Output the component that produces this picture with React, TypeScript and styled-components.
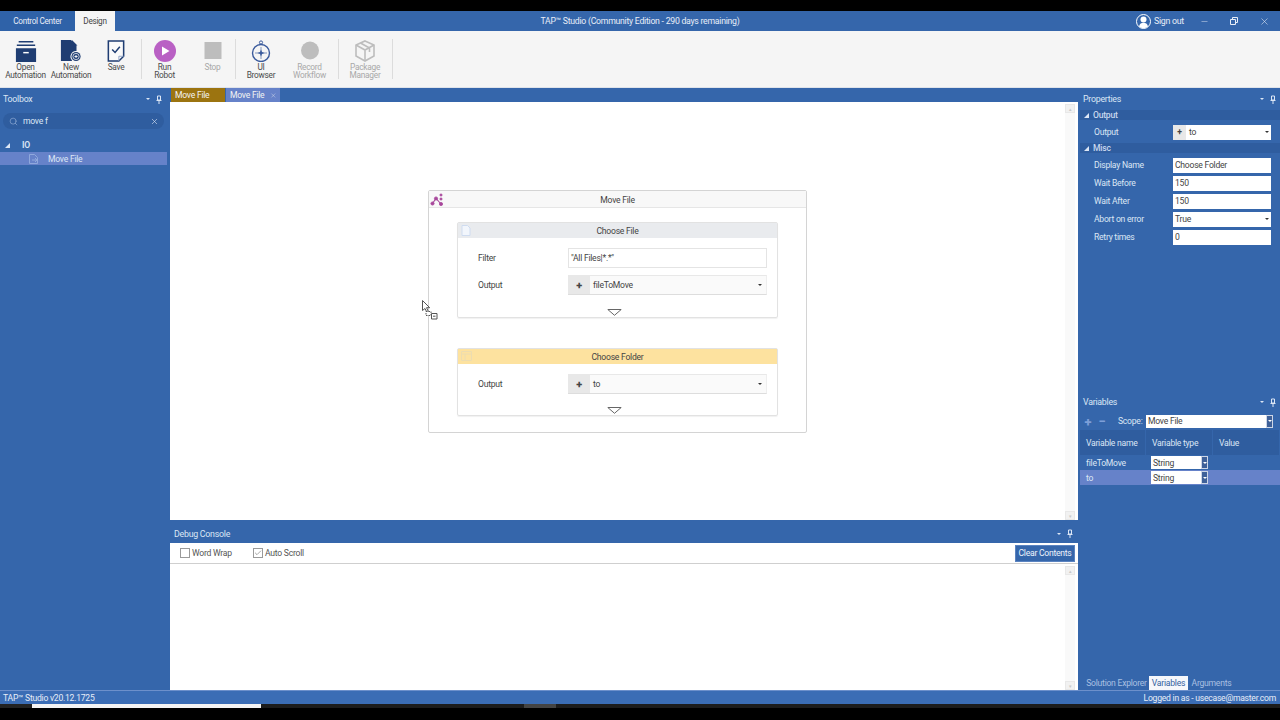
import styled, { createGlobalStyle } from 'styled-components';
import { X, Minus, Search, Check } from 'lucide-react';

const BLUE = '#3566ab';
const DARK = '#2f5d9f';
const SELECT = '#6682c9';

const GlobalStyle = createGlobalStyle`
    html, body {
        margin: 0;
        padding: 0;
        background: #000;
    }
    * {
        box-sizing: border-box;
    }
`;

const Screen = styled.div`
    width: 1280px;
    height: 720px;
    overflow: hidden;
    display: flex;
    flex-direction: column;
    background: #000;
    padding: 11px 0 12px;
    font-family: 'Roboto', 'Open Sans', sans-serif;
    font-size: 8.6px;
    letter-spacing: -0.25px;
    color: #fff;
    white-space: nowrap;
`;

const TitleBar = styled.div`
    height: 20px;
    flex: none;
    background: ${BLUE};
    display: grid;
    grid-template-columns: 1fr auto 1fr;
    align-items: stretch;
`;

const TabGroup = styled.div`
    display: flex;
`;

const TopTab = styled.div<{ $active?: boolean; $width: number }>`
    width: ${(p) => p.$width}px;
    display: flex;
    align-items: center;
    justify-content: center;
    font-size: 8.2px;
    letter-spacing: -0.3px;
    background: ${(p) => (p.$active ? '#f5f5f5' : '#2f62a8')};
    color: ${(p) => (p.$active ? '#444' : '#e8eef8')};
`;

const AppTitle = styled.div`
    display: flex;
    align-items: center;
    color: #e8eef8;
    font-size: 8.7px;
`;

const WindowControls = styled.div`
    display: flex;
    align-items: center;
    justify-content: flex-end;
    color: #e8eef8;
    padding-right: 1px;
`;

const SignOut = styled.span`
    margin: 0 5px 0 3px;
    font-size: 8.8px;
`;

const WindowButton = styled.div`
    width: 30px;
    display: flex;
    align-items: center;
    justify-content: center;
`;

const Ribbon = styled.div`
    height: 57px;
    flex: none;
    background: #f5f5f5;
    display: flex;
    padding: 9px 0 0 3px;
    border-bottom: 1px solid #dfe3ea;
`;

const RibbonButton = styled.div<{ $width: number; $left?: number; $disabled?: boolean }>`
    width: ${(p) => p.$width}px;
    height: 40px;
    flex: none;
    margin-left: ${(p) => p.$left || 0}px;
    display: flex;
    flex-direction: column;
    align-items: center;
    color: ${(p) => (p.$disabled ? '#a8a8a8' : '#4a4a4a')};
    font-size: 8.3px;
    letter-spacing: -0.25px;
    line-height: 7.5px;
    text-align: center;

    svg {
        flex: none;
        height: 22px;
        margin-bottom: 2px;
    }
`;

const RibbonSeparator = styled.div<{ $gap?: number }>`
    width: 1px;
    height: 40px;
    flex: none;
    margin-top: -1px;
    margin-left: ${(p) => p.$gap || 0}px;
    background: #dcdcdc;
`;

const Main = styled.div`
    flex: 1;
    min-height: 0;
    display: flex;
    background: ${BLUE};
`;

const LeftPanel = styled.div`
    width: 170px;
    flex: none;
    display: flex;
    flex-direction: column;
`;

const PanelHeader = styled.div<{ $inset: number }>`
    height: 22px;
    flex: none;
    display: flex;
    align-items: center;
    justify-content: space-between;
    padding: 0 ${(p) => p.$inset}px 0 3px;
    color: #dce6f5;
    font-size: 8.8px;
`;

const DockIcons = styled.div`
    display: flex;
    align-items: center;
    gap: 5px;
`;

const SearchBox = styled.div`
    height: 16px;
    margin: 3px 6px 0 3px;
    border-radius: 8px;
    background: ${DARK};
    display: flex;
    align-items: center;
    padding: 0 5px 0 6px;
    gap: 5px;
    color: #dce6f5;
`;

const SearchText = styled.span`
    flex: 1;
`;

const TreeGroup = styled.div`
    height: 16px;
    margin-top: 7px;
    padding: 2px 0 0 5px;
    display: flex;
    align-items: center;
    gap: 12px;
    font-weight: 600;
    color: #dce6f5;
`;

const TreeRow = styled.div`
    height: 13px;
    width: 167px;
    background: ${SELECT};
    display: flex;
    align-items: center;
    gap: 10px;
    padding-left: 29px;
    color: #dce6f5;
`;

const Center = styled.div`
    width: 908px;
    flex: none;
    display: flex;
    flex-direction: column;
`;

const DocTabs = styled.div`
    height: 14px;
    flex: none;
    display: flex;
    background: ${BLUE};
    align-items: stretch;
    padding-left: 1px;
`;

const DocTab = styled.div<{ $active?: boolean }>`
    display: flex;
    align-items: center;
    gap: 6px;
    padding: 0 3px 0 4px;
    width: 54px;
    margin-left: ${(p) => (p.$active ? '1px' : '0')};
    background: ${(p) => (p.$active ? SELECT : '#9c7410')};
    color: #f2f2f2;
`;

const Document = styled.div`
    height: 418px;
    flex: none;
    position: relative;
    background: #fff;
    padding: 88px 0 0 258px;
`;

const ScrollTrack = styled.div`
    position: absolute;
    top: 2px;
    right: 3px;
    bottom: 0;
    width: 10px;
    background: #f9f9f9;
    display: flex;
    flex-direction: column;
    justify-content: space-between;
`;

const ScrollButton = styled.div`
    height: 9px;
    background: #f1f1f1;
    border: 1px solid #e8e8e8;
    display: flex;
    align-items: center;
    justify-content: center;
    color: #c8c8c8;
    font-size: 5px;
`;

const WorkflowCard = styled.div`
    width: 379px;
    height: 243px;
    border: 1px solid #d4d4d4;
    border-radius: 2px;
    color: #444;
`;

const WorkflowTitle = styled.div`
    height: 17px;
    background: #f8f8f8;
    border-bottom: 1px solid #e6e6e6;
    display: flex;
    align-items: center;
    justify-content: center;
    position: relative;
    padding: 1px 0 0;

    svg {
        position: absolute;
        left: 1px;
        top: 2px;
    }
`;

const ActivityCard = styled.div<{ $height: number; $top: number }>`
    width: 321px;
    height: ${(p) => p.$height}px;
    margin: ${(p) => p.$top}px 0 0 28px;
    border: 1px solid #e2e2e2;
    border-radius: 2px;
    box-shadow: 0 1px 1px rgba(0, 0, 0, 0.06);
    display: flex;
    flex-direction: column;
`;

const ActivityHeader = styled.div<{ $color: string; $height: number }>`
    height: ${(p) => p.$height}px;
    flex: none;
    background: ${(p) => p.$color};
    display: flex;
    align-items: center;
    justify-content: center;
    position: relative;

    svg {
        position: absolute;
        left: 3px;
        top: 2px;
    }
`;

const FieldList = styled.div`
    padding: 10px 10px 0 20px;
    display: flex;
    flex-direction: column;
    gap: 7px;
`;

const FieldRow = styled.div`
    height: 20px;
    display: flex;
    align-items: center;
`;

const FieldLabel = styled.div`
    width: 90px;
    flex: none;
`;

const TextField = styled.div`
    flex: 1;
    height: 20px;
    border: 1px solid #e4e4e4;
    background: #fff;
    display: flex;
    align-items: center;
    padding-left: 2px;
`;

const ComboField = styled.div`
    flex: 1;
    height: 20px;
    display: flex;
    align-items: stretch;
    background: #fafafa;
    border-bottom: 1px solid #ddd;
    border-top: 1px solid #e8e8e8;
    border-right: 1px solid #eee;
`;

const ComboPlus = styled.div`
    width: 22px;
    background: #e8e8e8;
    display: flex;
    align-items: center;
    justify-content: center;
    font-weight: 800;
    font-size: 11px;
    color: #444;
`;

const ComboValue = styled.div`
    flex: 1;
    display: flex;
    align-items: center;
    padding: 0 3px;
    justify-content: space-between;
`;

const Caret = styled.span<{ $color?: string }>`
    width: 0;
    height: 0;
    border-left: 2px solid transparent;
    border-right: 2px solid transparent;
    border-top: 2.5px solid ${(p) => p.$color || '#333'};
    margin-right: 1px;
`;

const ExpandRow = styled.div`
    flex: 1;
    display: flex;
    align-items: flex-end;
    justify-content: center;
    padding: 0 6px 1px 0;
`;

const DragCursor = styled.svg`
    position: absolute;
    left: 252px;
    top: 198px;
`;

const DebugHeader = styled.div`
    height: 23px;
    flex: none;
    display: flex;
    align-items: center;
    justify-content: space-between;
    padding: 4px 5px 0 4px;
    color: #dce6f5;
    font-size: 8.8px;
`;

const DebugToolbar = styled.div`
    height: 21px;
    flex: none;
    background: #fff;
    border-bottom: 1px solid #cfcfcf;
    display: flex;
    align-items: center;
    padding: 0 4px 0 10px;
    color: #555;
`;

const CheckOption = styled.div<{ $width: number }>`
    width: ${(p) => p.$width}px;
    display: flex;
    align-items: center;
    gap: 2px;
`;

const CheckBox = styled.div`
    width: 10px;
    height: 10px;
    flex: none;
    border: 1px solid #9a9a9a;
    display: flex;
    align-items: center;
    justify-content: center;
    color: #444;

    svg {
        flex: none;
    }
`;

const ClearButton = styled.div`
    margin-left: auto;
    width: 58px;
    height: 15px;
    background: ${BLUE};
    outline: 1px solid #5a83c0;
    display: flex;
    align-items: center;
    justify-content: center;
    color: #eef3fb;
`;

const DebugOutput = styled.div`
    flex: 1;
    position: relative;
    background: #fff;
`;

const RightPanel = styled.div`
    flex: 1;
    min-width: 0;
    display: flex;
    flex-direction: column;
    padding-left: 2px;
`;

const PropertiesPane = styled.div`
    height: 303px;
    flex: none;
`;

const SectionBar = styled.div`
    height: 10px;
    margin-bottom: 3px;
    background: ${DARK};
    display: flex;
    align-items: center;
    gap: 4px;
    padding-left: 4px;
    color: #c9d8ee;
    font-weight: 500;
`;

const PropRow = styled.div`
    height: 18px;
    display: flex;
    align-items: center;
    padding: 0 9px 0 14px;
    color: #dce6f5;

    & + ${SectionBar} {
        margin-top: 2px;
    }
`;

const PropLabel = styled.div`
    width: 79px;
    flex: none;
`;

const PropInput = styled.div`
    width: 98px;
    height: 15px;
    flex: none;
    background: #fff;
    color: #444;
    display: flex;
    align-items: center;
    padding: 0 1px 0 2px;

    span:last-child {
        margin-left: auto;
    }
`;

const PropPlus = styled.div`
    width: 13px;
    height: 15px;
    margin: 0 3px 0 -2px;
    background: #e8e8e8;
    display: flex;
    align-items: center;
    justify-content: center;
    font-weight: 700;
`;

const VariablesPane = styled.div`
    flex: 1;
    min-height: 0;
    display: flex;
    flex-direction: column;
`;

const ScopeRow = styled.div`
    height: 16px;
    margin-bottom: 1px;
    display: flex;
    align-items: center;
    padding-left: 1px;
    color: #dce6f5;
`;

const ScopeAction = styled.span`
    width: 14px;
    color: #7d9fd8;
    font-size: 13px;
    font-weight: 800;
    line-height: 13px;
    text-align: center;
`;

const ScopeLabel = styled.span`
    width: 28px;
    margin-left: 9px;
`;

const ScopeSelect = styled.div`
    width: 127px;
    height: 13px;
    background: #fff;
    color: #444;
    display: flex;
    align-items: center;
    justify-content: space-between;
    padding-left: 2px;
`;

const SelectArrow = styled.div`
    width: 7px;
    height: 13px;
    background: #3f6199;
    border: 1px solid #cdd6e6;
    display: flex;
    align-items: center;
    justify-content: center;

    span {
        margin: 0;
    }
`;

const VarGrid = styled.div`
    display: grid;
    grid-template-columns: 66px 67px 1fr;
`;

const VarHead = styled.div`
    height: 25px;
    background: ${DARK};
    display: flex;
    align-items: center;
    padding-left: 6px;
    color: #dce6f5;
    margin-right: 1px;
`;

const VarRow = styled.div<{ $selected?: boolean }>`
    height: 15px;
    display: grid;
    grid-template-columns: 65px 1fr;
    align-items: center;
    padding-left: 6px;
    background: ${(p) => (p.$selected ? SELECT : 'transparent')};
    color: #dce6f5;
`;

const VarType = styled.div`
    width: 57px;
    height: 13px;
    background: #fff;
    color: #444;
    display: flex;
    align-items: center;
    justify-content: space-between;
    padding-left: 2px;
`;

const PaneTabs = styled.div`
    margin-top: auto;
    height: 14px;
    display: flex;
    align-items: stretch;
    padding-left: 4px;
`;

const PaneTab = styled.div<{ $active?: boolean; $width: number }>`
    width: ${(p) => p.$width}px;
    display: flex;
    align-items: center;
    justify-content: center;
    background: ${(p) => (p.$active ? '#f5f7fb' : 'transparent')};
    color: ${(p) => (p.$active ? '#34619f' : '#a9c0e2')};
`;

const StatusBar = styled.div`
    height: 14px;
    flex: none;
    background: #3b6db5;
    border-top: 1px solid #6d90cb;
    display: flex;
    align-items: center;
    justify-content: space-between;
    padding: 0 4px 0 3px;
    color: #e8eef8;
`;

const Taskbar = styled.div`
    height: 4px;
    flex: none;
    background: #1c1c1c;
    display: flex;
`;

const TaskSegment = styled.div<{ $width: number; $color: string }>`
    width: ${(p) => p.$width}px;
    flex: none;
    background: ${(p) => p.$color};
`;

const DockGlyphs = ({ color = '#dce6f5' }: { color?: string }) => (
    <DockIcons>
        <Caret $color={color} />
        <svg width="6" height="9" viewBox="0 0 6 9" fill="none" stroke={color} strokeWidth="1">
            <path d="M1.5 1h3v4h-3zM.5 5.5h5M3 5.5V9" />
        </svg>
    </DockIcons>
);

const TreeArrow = () => (
    <svg width="5" height="5" viewBox="0 0 5 5">
        <path d="M5 0v5H0z" fill="#dce6f5" />
    </svg>
);

const Chevron = () => (
    <svg width="15" height="7" viewBox="0 0 15 7" fill="none" stroke="#666" strokeWidth="1">
        <path d="M.8.5h13.4L7.5 6.3z" />
    </svg>
);

const Scrollbar = () => (
    <ScrollTrack>
        <ScrollButton>▴</ScrollButton>
        <ScrollButton>▾</ScrollButton>
    </ScrollTrack>
);

const App = () => {
    return (
        <>
            <GlobalStyle />
            <Screen>
                <TitleBar>
                    <TabGroup>
                        <TopTab $width={75}>Control Center</TopTab>
                        <TopTab $width={40} $active>Design</TopTab>
                    </TabGroup>
                    <AppTitle>TAP™ Studio (Community Edition - 290 days remaining)</AppTitle>
                    <WindowControls>
                        <svg width="15" height="15" viewBox="0 0 15 15">
                            <circle cx="7.5" cy="7.5" r="7" fill="#3566ab" stroke="#fff" strokeWidth="1" />
                            <circle cx="7.5" cy="5.6" r="3" fill="#fff" />
                            <path d="M3 12.5c.5-3 2.5-3.8 4.5-3.8s4 .8 4.5 3.8a7 7 0 0 1-9 0z" fill="#fff" />
                        </svg>
                        <SignOut>Sign out</SignOut>
                        <WindowButton><Minus size={9} strokeWidth={1.2} /></WindowButton>
                        <WindowButton>
                            <svg width="8" height="8" viewBox="0 0 8 8" fill="none" stroke="#e8eef8" strokeWidth="1">
                                <path d="M.5 2.5h5v5h-5zM2.5 2.5v-2h5v5h-2" />
                            </svg>
                        </WindowButton>
                        <WindowButton><X size={11} strokeWidth={1.2} /></WindowButton>
                    </WindowControls>
                </TitleBar>

                <Ribbon>
                    <RibbonButton $width={45}>
                        <svg width="22" height="24" viewBox="0 0 22 24">
                            <path d="M3 1h16v1.6H3zM1 5h20v1.6H1z" fill="#1f3d72" />
                            <path d="M0 9h22v15H0z" fill="#1f3d72" />
                            <path d="M8 13h6v1.6H8z" fill="#fff" />
                        </svg>
                        Open<br />Automation
                    </RibbonButton>
                    <RibbonButton $width={46}>
                        <svg width="22" height="24" viewBox="0 0 22 24">
                            <path d="M0 0h11l6 6v6a6 6 0 0 0-5 10v1H0z" fill="#1f3d72" />
                            <path d="M12 0l6 6h-6z" fill="#1f3d72" />
                            <circle cx="16.5" cy="18" r="5" fill="#1f3d72" />
                            <circle cx="16.5" cy="18" r="3.4" fill="none" stroke="#fff" strokeWidth=".8" />
                            <path d="M14.8 18h3.4M16.5 16.3v3.4" stroke="#fff" strokeWidth="1" />
                        </svg>
                        New<br />Automation
                    </RibbonButton>
                    <RibbonButton $width={44}>
                        <svg width="18" height="23" viewBox="0 0 18 23" fill="none">
                            <path d="M1 1h16v16l-5 5H1z" fill="#fafafa" stroke="#1f3d72" strokeWidth="1.6" />
                            <path d="M5 10l3 3 5-6" stroke="#1f3d72" strokeWidth="1.6" />
                            <path d="M12 22v-5h5" stroke="#8fa2c4" strokeWidth="1" />
                        </svg>
                        Save
                    </RibbonButton>
                    <RibbonSeparator $gap={3} />
                    <RibbonButton $width={45}>
                        <svg width="22" height="22" viewBox="0 0 22 22">
                            <circle cx="11" cy="11" r="11" fill="#b960c4" />
                            <path d="M8 6.5v9l7.5-4.5z" fill="#fff" />
                        </svg>
                        Run<br />Robot
                    </RibbonButton>
                    <RibbonButton $width={45} $left={3} $disabled>
                        <svg width="22" height="22" viewBox="0 0 22 22">
                            <rect x="2.5" y="2" width="17" height="17" fill="#bdbdbd" />
                        </svg>
                        Stop
                    </RibbonButton>
                    <RibbonSeparator />
                    <RibbonButton $width={50}>
                        <svg width="20" height="22" viewBox="0 0 20 22" fill="none" stroke="#3a5a9c">
                            <circle cx="10" cy="13" r="8.5" strokeWidth="1.4" />
                            <circle cx="10" cy="2.5" r="1.6" strokeWidth="1" />
                            <path d="M10 7v12M4 13h12" strokeWidth=".6" />
                            <path d="M10 9.5l1 2.5 2.5 1-2.5 1-1 2.5-1-2.5-2.5-1 2.5-1z" fill="#3a5a9c" stroke="none" />
                        </svg>
                        UI<br />Browser
                    </RibbonButton>
                    <RibbonButton $width={47} $disabled>
                        <svg width="22" height="22" viewBox="0 0 22 22">
                            <circle cx="11" cy="10.5" r="9" fill="#bdbdbd" />
                        </svg>
                        Record<br />Workflow
                    </RibbonButton>
                    <RibbonSeparator $gap={5} />
                    <RibbonButton $width={52} $disabled>
                        <svg width="22" height="22" viewBox="0 0 22 22" fill="none" stroke="#bdbdbd" strokeWidth="1.6">
                            <path d="M11 1l9 4v11l-9 5-9-5V5z" />
                            <path d="M2 5l9 5 9-5M11 10v11M6.5 3l9 5v4" />
                        </svg>
                        Package<br />Manager
                    </RibbonButton>
                    <RibbonSeparator $gap={1} />
                </Ribbon>

                <Main>
                    <LeftPanel>
                        <PanelHeader $inset={8}>
                            Toolbox
                            <DockGlyphs />
                        </PanelHeader>
                        <SearchBox>
                            <Search size={9} strokeWidth={1.4} color="#a9c0e2" />
                            <SearchText>move f</SearchText>
                            <X size={9} strokeWidth={1.6} />
                        </SearchBox>
                        <TreeGroup>
                            <TreeArrow />
                            IO
                        </TreeGroup>
                        <TreeRow>
                            <svg width="9" height="10" viewBox="0 0 9 10" fill="none" stroke="#8fa8dc" strokeWidth="1">
                                <path d="M.5.5h5l3 3v6h-8zM3 6h5M6 4l2 2-2 2" />
                            </svg>
                            Move File
                        </TreeRow>
                    </LeftPanel>

                    <Center>
                        <DocTabs>
                            <DocTab>Move File</DocTab>
                            <DocTab $active>
                                Move File
                                <X size={9} strokeWidth={1.4} />
                            </DocTab>
                        </DocTabs>
                        <Document>
                            <WorkflowCard>
                                <WorkflowTitle>
                                    <svg width="14" height="13" viewBox="0 0 14 13" fill="#a8489c" stroke="#a8489c" strokeWidth=".8">
                                        <circle cx="2.5" cy="10.5" r="1.6" />
                                        <circle cx="6" cy="5.5" r="1.6" />
                                        <circle cx="11" cy="2" r="1.1" />
                                        <circle cx="11" cy="6" r="1.1" />
                                        <circle cx="11" cy="11" r="1.6" />
                                        <path d="M2.5 10.5L6 5.5l5 5.5" fill="none" strokeWidth="1.1" />
                                    </svg>
                                    Move File
                                </WorkflowTitle>
                                <ActivityCard $height={96} $top={14}>
                                    <ActivityHeader $color="#e9ebee" $height={15}>
                                        <svg width="10" height="11" viewBox="0 0 10 11" fill="#f2f6fc" stroke="#cfdcf0" strokeWidth="1">
                                            <path d="M1 .5h5.5L9 3v7.5H1z" />
                                        </svg>
                                        Choose File
                                    </ActivityHeader>
                                    <FieldList>
                                        <FieldRow>
                                            <FieldLabel>Filter</FieldLabel>
                                            <TextField>"All Files|*.*"</TextField>
                                        </FieldRow>
                                        <FieldRow>
                                            <FieldLabel>Output</FieldLabel>
                                            <ComboField>
                                                <ComboPlus>+</ComboPlus>
                                                <ComboValue>
                                                    fileToMove
                                                    <Caret />
                                                </ComboValue>
                                            </ComboField>
                                        </FieldRow>
                                    </FieldList>
                                    <ExpandRow><Chevron /></ExpandRow>
                                </ActivityCard>
                                <ActivityCard $height={68} $top={30}>
                                    <ActivityHeader $color="#fde29f" $height={15}>
                                        <svg width="11" height="10" viewBox="0 0 11 10" fill="none" stroke="#ecdcb0" strokeWidth="1">
                                            <path d="M.5.5h10v9H.5zM.5 3h10M4 3v6.5" />
                                        </svg>
                                        Choose Folder
                                    </ActivityHeader>
                                    <FieldList>
                                        <FieldRow>
                                            <FieldLabel>Output</FieldLabel>
                                            <ComboField>
                                                <ComboPlus>+</ComboPlus>
                                                <ComboValue>
                                                    to
                                                    <Caret />
                                                </ComboValue>
                                            </ComboField>
                                        </FieldRow>
                                    </FieldList>
                                    <ExpandRow><Chevron /></ExpandRow>
                                </ActivityCard>
                            </WorkflowCard>
                            <Scrollbar />
                            <DragCursor width="16" height="20" viewBox="0 0 16 20" fill="#fff" stroke="#555" strokeWidth="1">
                                <path d="M.5.5v10l2.5-2 2 4 1.5-.8-2-4h3.2z" />
                                <path d="M4 11.5h5v4H4z" strokeDasharray="1.5 1" />
                                <path d="M9.5 13.5h5.5v5.5H9.5zM11 16.2h2.5" />
                            </DragCursor>
                        </Document>
                        <DebugHeader>
                            Debug Console
                            <DockGlyphs />
                        </DebugHeader>
                        <DebugToolbar>
                            <CheckOption $width={73}>
                                <CheckBox />
                                Word Wrap
                            </CheckOption>
                            <CheckOption $width={70}>
                                <CheckBox><Check size={8} strokeWidth={1.4} /></CheckBox>
                                Auto Scroll
                            </CheckOption>
                            <ClearButton>Clear Contents</ClearButton>
                        </DebugToolbar>
                        <DebugOutput>
                            <Scrollbar />
                        </DebugOutput>
                    </Center>

                    <RightPanel>
                        <PropertiesPane>
                            <PanelHeader $inset={4}>
                                Properties
                                <DockGlyphs />
                            </PanelHeader>
                            <SectionBar><TreeArrow />Output</SectionBar>
                            <PropRow>
                                <PropLabel>Output</PropLabel>
                                <PropInput>
                                    <PropPlus>+</PropPlus>
                                    to
                                    <Caret />
                                </PropInput>
                            </PropRow>
                            <SectionBar><TreeArrow />Misc</SectionBar>
                            <PropRow>
                                <PropLabel>Display Name</PropLabel>
                                <PropInput>Choose Folder</PropInput>
                            </PropRow>
                            <PropRow>
                                <PropLabel>Wait Before</PropLabel>
                                <PropInput>150</PropInput>
                            </PropRow>
                            <PropRow>
                                <PropLabel>Wait After</PropLabel>
                                <PropInput>150</PropInput>
                            </PropRow>
                            <PropRow>
                                <PropLabel>Abort on error</PropLabel>
                                <PropInput>
                                    True
                                    <Caret />
                                </PropInput>
                            </PropRow>
                            <PropRow>
                                <PropLabel>Retry times</PropLabel>
                                <PropInput>0</PropInput>
                            </PropRow>
                        </PropertiesPane>
                        <VariablesPane>
                            <PanelHeader $inset={4}>
                                Variables
                                <DockGlyphs />
                            </PanelHeader>
                            <ScopeRow>
                                <ScopeAction>+</ScopeAction>
                                <ScopeAction>−</ScopeAction>
                                <ScopeLabel>Scope:</ScopeLabel>
                                <ScopeSelect>
                                    Move File
                                    <SelectArrow><Caret $color="#fff" /></SelectArrow>
                                </ScopeSelect>
                            </ScopeRow>
                            <VarGrid>
                                <VarHead>Variable name</VarHead>
                                <VarHead>Variable type</VarHead>
                                <VarHead>Value</VarHead>
                            </VarGrid>
                            <VarRow>
                                fileToMove
                                <VarType>
                                    String
                                    <SelectArrow><Caret $color="#fff" /></SelectArrow>
                                </VarType>
                            </VarRow>
                            <VarRow $selected>
                                to
                                <VarType>
                                    String
                                    <SelectArrow><Caret $color="#fff" /></SelectArrow>
                                </VarType>
                            </VarRow>
                            <PaneTabs>
                                <PaneTab $width={65}>Solution Explorer</PaneTab>
                                <PaneTab $width={39} $active>Variables</PaneTab>
                                <PaneTab $width={47}>Arguments</PaneTab>
                            </PaneTabs>
                        </VariablesPane>
                    </RightPanel>
                </Main>

                <StatusBar>
                    <span>TAP™ Studio v20.12.1725</span>
                    <span>Logged in as - usecase@master.com</span>
                </StatusBar>
                <Taskbar>
                    <TaskSegment $width={32} $color="#222" />
                    <TaskSegment $width={229} $color="#f4f4f4" />
                    <TaskSegment $width={263} $color="#1c1c1c" />
                    <TaskSegment $width={32} $color="#444" />
                </Taskbar>
            </Screen>
        </>
    );
};

export default App;
